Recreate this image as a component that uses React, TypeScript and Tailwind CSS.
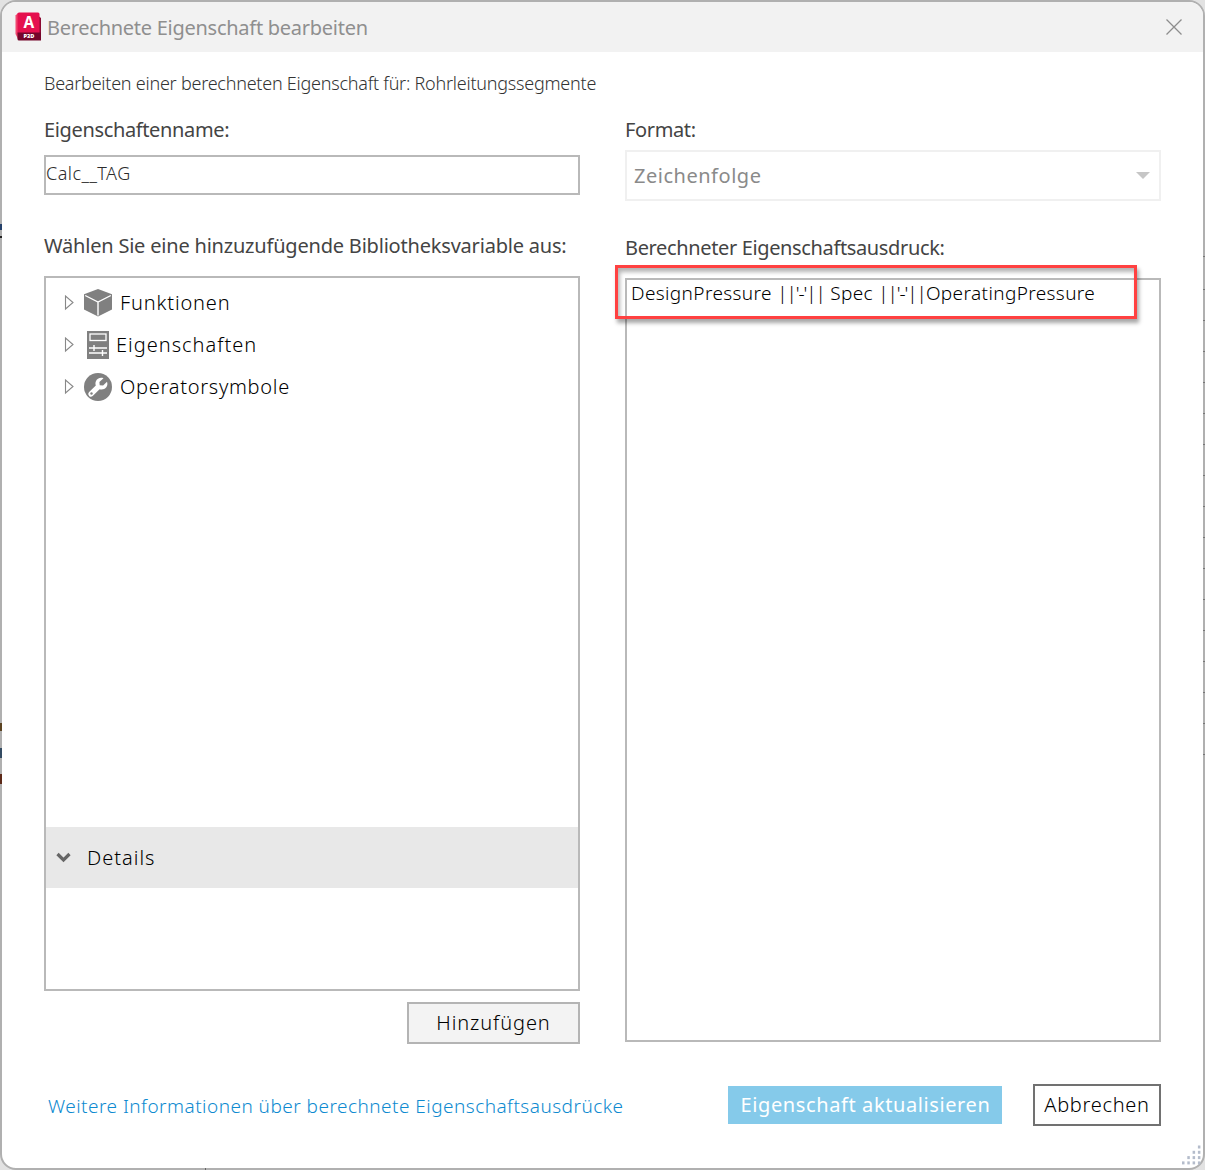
import type { ReactNode } from "react";
import clsx from "clsx";

type TreeItem = {
  label: string;
  icon: ReactNode;
  className: string;
};

const AppIcon = () => (
  <svg width="28" height="30" viewBox="0 0 28 30" className="shrink-0">
    <path d="M3 1h4v26H3L0.500 22V3.500Z" fill="#f0466f" />
    <path d="M24 4.500L26 6v22h-3Z" fill="#8b0a33" />
    <rect x="2.500" y="0.500" width="22" height="22" rx="1.500" fill="#e5104e" />
    <path d="M2.500 20.500h23.500v8H4q-1.500 0-1.500-1.500Z" fill="#74062b" />
    <text x="13.900" y="15.500" textAnchor="middle" fontSize="15.500" fontWeight="700" fill="#fff" fontFamily="Open Sans, sans-serif">
      A
    </text>
    <text x="14" y="26.200" textAnchor="middle" fontSize="5.600" fontWeight="800" fill="#fff" fontFamily="Open Sans, sans-serif">
      P3D
    </text>
  </svg>
);

const CubeIcon = () => (
  <svg width="28" height="28" viewBox="0 0 28 28">
    <path d="M14 0L28 5.200V20.500L14 27.500L0 20.500V5.200Z" fill="#808080" />
    <path d="M1.200 6.500L14 13L26.800 6.500M14 13V26.500" fill="none" stroke="#fff" strokeWidth="1.400" />
  </svg>
);

const PropertiesIcon = () => (
  <svg width="22" height="28" viewBox="0 0 22 28">
    <rect width="22" height="28" fill="#808080" />
    <rect x="3" y="3" width="16" height="6.500" fill="none" stroke="#fff" strokeWidth="1.300" />
    <path d="M2 17h18M2 22h18M7 14v6M15.500 19v6" stroke="#fff" strokeWidth="1.400" />
  </svg>
);

const WrenchIcon = () => (
  <svg width="28" height="28" viewBox="0 0 28 28">
    <circle cx="14" cy="14" r="14" fill="#808080" />
    <path
      d="M19.500 5.200C16.500 4.200 13 5.200 11.800 8.400C11.300 9.800 11.400 11.200 11.800 12.400L4.900 19.300A2.700 2.700 0 0 0 8.700 23.100L15.600 16.200C18 17 20.700 16.300 22.300 14.300C23.500 12.700 23.700 10.600 23 8.700L19.100 12.600L15.700 12.300L15.400 9.100Z"
      fill="#fff"
    />
    <circle cx="7.500" cy="20.500" r="1.200" fill="#808080" />
  </svg>
);

const ExpandArrow = () => (
  <svg width="10" height="16" viewBox="0 0 10 16" className="shrink-0">
    <path d="M1.500 1V14L9 7.500Z" fill="#fff" stroke="#888" strokeWidth="1.100" />
  </svg>
);

const ResizeGrip = () => {
  const dots = [[3, 0], [2, 1], [3, 1], [1, 2], [2, 2], [3, 2], [0, 3], [1, 3], [2, 3], [3, 3]];
  return (
    <svg width="20" height="21" viewBox="0 0 20 21">
      {dots.map(([col, row]) => (
        <rect key={`${col}-${row}`} x={col * 5.3 + 1} y={row * 5.3 + 0.5} width="2.500" height="3" fill="#b4bccb" />
      ))}
    </svg>
  );
};

const tree: TreeItem[] = [
  { label: "Funktionen", icon: <CubeIcon />, className: "pl-2 tracking-[0.85px]" },
  { label: "Eigenschaften", icon: <PropertiesIcon />, className: "pl-1 tracking-[1px]" },
  { label: "Operatorsymbole", icon: <WrenchIcon />, className: "pl-2 tracking-[0.72px]" },
];

const leftMarks = [
  "top-[224px] h-[6px] bg-[#24406a]",
  "top-[236px] h-[2px] bg-[#222]",
  "top-[723px] h-[8px] bg-[#5b4321]",
  "top-[748px] h-[10px] bg-[#334b62]",
  "top-[774px] h-[10px] bg-[#5c2918]",
];

const rightMarks = [
  "top-[256px]", "top-[289px]", "top-[320px]", "top-[351px]", "top-[382px]", "top-[413px]",
  "top-[444px]", "top-[475px]", "top-[506px]", "top-[537px]", "top-[568px]", "top-[599px]",
  "top-[630px]", "top-[661px]", "top-[692px]", "top-[723px]", "top-[754px]",
];

const Label = ({ children, className }: { children: ReactNode; className?: string }) => (
  <div className={clsx("h-6 whitespace-nowrap text-[20px] leading-6 text-[#444]", className)}>{children}</div>
);

const Concat = () => <span className="tracking-[-1.05px]">||'-'||</span>;

const TitleBar = () => (
  <header className="flex h-[50px] shrink-0 items-center bg-[#f2f2f2] pl-[13px] pr-[21px]">
    <AppIcon />
    <h1 className="ml-[4px] flex-1 whitespace-nowrap pt-[2px] text-[20px] leading-6 tracking-[-0.27px] text-[#8f8f8f]">
      Berechnete Eigenschaft bearbeiten
    </h1>
    <button aria-label="Schließen">
      <svg width="16" height="16" viewBox="0 0 16 16">
        <path d="M0.500 0.500L15.500 15.500M15.500 0.500L0.500 15.500" stroke="#8d8d8d" strokeWidth="1.300" />
      </svg>
    </button>
  </header>
);

const LibraryPanel = () => (
  <div className="mt-[18px] flex h-[715px] flex-col border-2 border-[#b9b9b9]">
    <ul className="h-[549px] shrink-0 pt-1">
      {tree.map(item => (
        <li key={item.label} className="flex h-[42px] items-center pl-[18px]">
          <ExpandArrow />
          <span className="ml-[10px] flex w-7 justify-center">{item.icon}</span>
          <span className={clsx("text-[20px] font-[360] text-black", item.className)}>{item.label}</span>
        </li>
      ))}
    </ul>
    <div className="flex h-[61px] shrink-0 items-center bg-[#e8e8e8] pl-[10px]">
      <svg width="15" height="11" viewBox="0 0 15 11">
        <path d="M1.500 2L7.500 8L13.500 2" fill="none" stroke="#666" strokeWidth="3.200" />
      </svg>
      <span className="ml-4 text-[20px] font-[360] tracking-[1px] text-black">Details</span>
    </div>
  </div>
);

export default function App() {
  return (
    <div className="relative h-[1170px] w-[1205px] overflow-hidden bg-[#e2e2e2] font-['Noto_Sans','Open_Sans',sans-serif]">
      <div className="flex h-full flex-col overflow-hidden rounded-[16px] border-2 border-[#b0b0b0] bg-white">
        <TitleBar />
        <main className="flex flex-1 flex-col pl-[42px] pr-[42px] pt-[19px]">
          <p className="h-6 whitespace-nowrap text-[18px] font-light leading-6 tracking-[-0.24px] text-[#333]">
            Bearbeiten einer berechneten Eigenschaft für: Rohrleitungssegmente
          </p>
          <div className="mt-[23px] flex gap-[45px]">
            <section className="flex w-[536px] flex-col">
              <Label className="tracking-[-0.36px]">Eigenschaftenname:</Label>
              <div className="mt-[13px] h-10 border-2 border-[#b9b9b9] text-[18px] font-[360] leading-[33px] tracking-[0.45px] text-[#2c2c2c]">
                Calc__TAG
              </div>
              <Label className="mt-[39px] tracking-[-0.2px]">
                Wählen Sie eine hinzuzufügende Bibliotheksvariable aus:
              </Label>
              <LibraryPanel />
              <button className="mt-[11px] h-[42px] w-[173px] self-end border-2 border-[#b4b4b4] bg-[#f3f3f3] text-[20px] font-[360] tracking-[0.9px] text-black">
                Hinzufügen
              </button>
            </section>
            <section className="flex w-[536px] flex-col">
              <Label className="tracking-[-0.36px]">Format:</Label>
              <div className="mt-2 flex h-[51px] items-center justify-between border-2 border-[#f0f0f0] pl-[7px] pr-[9px] text-[20px] tracking-[0.52px] text-[#8a8a8a]">
                Zeichenfolge
                <svg width="14" height="7" viewBox="0 0 14 7">
                  <path d="M0 0H14L7 7Z" fill="#c6c6c6" />
                </svg>
              </div>
              <Label className="mt-[35px] tracking-[-0.36px]">Berechneter Eigenschaftsausdruck:</Label>
              <div className="relative mt-[18px] h-[764px] border-2 border-[#b9b9b9]">
                <div className="whitespace-nowrap pl-1 text-[19px] font-[360] leading-[26px] tracking-[0.38px] text-black">
                  DesignPressure <Concat /> Spec <Concat />OperatingPressure
                </div>
                <div className="absolute -left-[12px] -top-[15px] h-[54px] w-[522px] border-[3px] border-[#ff4141] shadow-[2px_4px_4px_rgba(0,0,0,0.35),inset_2px_4px_4px_rgba(0,0,0,0.3)]" />
              </div>
            </section>
          </div>
          <footer className="mt-10 flex h-[42px] items-center">
            <a className="ml-1 whitespace-nowrap pt-[2px] text-[19px] font-[360] tracking-[0.47px] text-[#0d8ad0]">
              Weitere Informationen über berechnete Eigenschaftsausdrücke
            </a>
            <button className="ml-auto h-[38px] w-[274px] whitespace-nowrap bg-[#85caea] pl-px text-[20px] tracking-[0.6px] text-white">
              Eigenschaft aktualisieren
            </button>
            <button className="ml-[31px] h-[42px] w-32 whitespace-nowrap border-2 border-[#717171] text-[20px] font-[360] tracking-[0.7px] text-black">
              Abbrechen
            </button>
          </footer>
        </main>
      </div>
      <div className="absolute bottom-[4px] right-[4px]">
        <ResizeGrip />
      </div>
      {leftMarks.map(mark => (
        <div key={mark} className={clsx("absolute left-0 w-[2px]", mark)} />
      ))}
      {rightMarks.map(mark => (
        <div key={mark} className={clsx("absolute right-0 h-px w-[2px] bg-[#777]", mark)} />
      ))}
      <div className="absolute bottom-0 left-[205px] h-[2px] w-px bg-[#666]" />
    </div>
  );
}
